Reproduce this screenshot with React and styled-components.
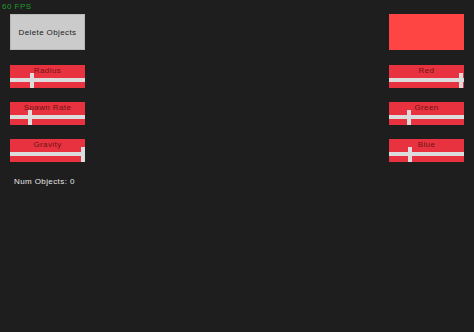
import React from "react";
import styled, { createGlobalStyle } from "styled-components";

const Global = createGlobalStyle`
  html, body { margin: 0; padding: 0; background: #1e1e1e; }
  body { width: 474px; height: 332px; overflow: hidden; font-family: "Liberation Sans", Arial, sans-serif; }
`;

const Page = styled.div`
  position: relative;
  width: 474px;
  height: 332px;
  background: #1e1e1e;
  display: flex;
  justify-content: space-between;
  padding: 14px 10px 0 10px;
  box-sizing: border-box;
`;

const Fps = styled.div`
  position: absolute;
  left: 2px;
  top: 2px;
  font-size: 8px;
  line-height: 9px;
  color: #1f9a2a;
  letter-spacing: 0.5px;
`;

const Column = styled.div`
  display: flex;
  flex-direction: column;
  width: 75px;
`;

const Button = styled.div`
  width: 75px;
  height: 36px;
  box-sizing: border-box;
  background: #cbcbcb;
  border: 1px solid #b8b8b8;
  display: flex;
  align-items: center;
  justify-content: center;
  font-size: 8px;
  letter-spacing: 0.4px;
  color: #202020;
  margin-bottom: 15px;
`;

const Swatch = styled.div`
  width: 75px;
  height: 36px;
  background: ${(p) => p.color};
  margin-bottom: 15px;
`;

const SliderBox = styled.div`
  position: relative;
  width: 75px;
  height: 23px;
  background: #e8323f;
  margin-bottom: 14px;
  display: flex;
  flex-direction: column;
`;

const Label = styled.div`
  height: 13px;
  padding-top: 1px;
  box-sizing: border-box;
  text-align: center;
  font-size: 8px;
  line-height: 9px;
  letter-spacing: 0.4px;
  color: #6e1414;
`;

const Track = styled.div`
  height: 4px;
  background: #dcdcdc;
`;

const Thumb = styled.div`
  position: absolute;
  top: 8px;
  bottom: 0;
  width: 4px;
  background: #dcdcdc;
`;

const Info = styled.div`
  font-size: 8px;
  line-height: 9px;
  letter-spacing: 0.4px;
  color: #e8e8e8;
  padding-left: 4px;
  margin-top: 1px;
`;

function Slider({ label, pos }) {
  return (
    <SliderBox>
      <Label>{label}</Label>
      <Track />
      <Thumb style={{ left: pos + "px" }} />
    </SliderBox>
  );
}

export default function App() {
  return (
    <>
      <Global />
      <Page>
        <Fps>60 FPS</Fps>
        <Column>
          <Button>Delete Objects</Button>
          <Slider label="Radius" pos={20} />
          <Slider label="Spawn Rate" pos={18} />
          <Slider label="Gravity" pos={71} />
          <Info>Num Objects: 0</Info>
        </Column>
        <Column>
          <Swatch color="#ff4444" />
          <Slider label="Red" pos={70} />
          <Slider label="Green" pos={18} />
          <Slider label="Blue" pos={19} />
        </Column>
      </Page>
    </>
  );
}
